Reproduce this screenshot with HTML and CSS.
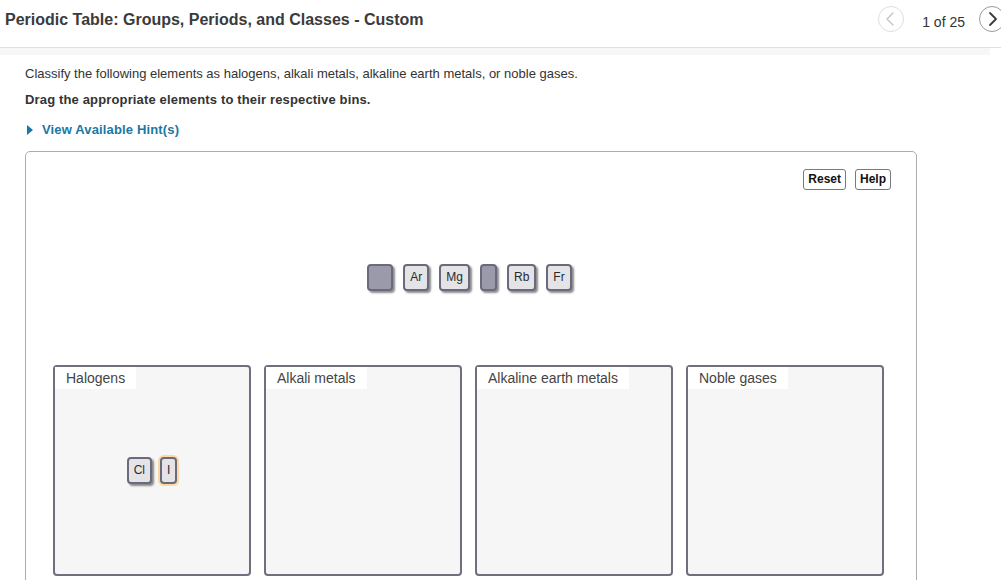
FILE: index.html
```html
<!DOCTYPE html>
<html lang="en">
<head>
<meta charset="utf-8">
<title>Periodic Table: Groups, Periods, and Classes - Custom</title>
<link rel="stylesheet" href="styles.css">
</head>
<body>
<header class="topbar">
  <h1 class="title">Periodic Table: Groups, Periods, and Classes - Custom</h1>
  <nav class="pager">
    <span class="circle circle-prev"><svg width="24" height="24" viewBox="0 0 24 24"><polyline points="14,6 8,12 14,18" fill="none" stroke="#c9c9c9" stroke-width="1.5" stroke-linecap="round" stroke-linejoin="round"/></svg></span>
    <span class="count">1 of 25</span>
    <span class="circle circle-next"><svg width="24" height="24" viewBox="0 0 24 24"><polyline points="10,6 16,12 10,18" fill="none" stroke="#3a3a3a" stroke-width="1.8" stroke-linecap="round" stroke-linejoin="round"/></svg></span>
  </nav>
</header>
<div class="strip"></div>
<main class="content">
  <p class="lead">Classify the following elements as halogens, alkali metals, alkaline earth metals, or noble gases.</p>
  <p class="task">Drag the appropriate elements to their respective bins.</p>
  <div class="hint"><span class="tri"></span><span class="hint-text">View Available Hint(s)</span></div>
  <section class="board">
    <div class="toolbar">
      <button class="btn">Reset</button>
      <button class="btn">Help</button>
    </div>
    <div class="pool">
      <span class="tile tile-blank tile-wide"></span>
      <span class="tile">Ar</span>
      <span class="tile">Mg</span>
      <span class="tile tile-blank tile-narrow"></span>
      <span class="tile">Rb</span>
      <span class="tile">Fr</span>
    </div>
    <div class="bins">
      <div class="bin">
        <span class="bin-label">Halogens</span>
        <div class="bin-tiles">
          <span class="tile">Cl</span>
          <span class="tile tile-active">I</span>
        </div>
      </div>
      <div class="bin">
        <span class="bin-label">Alkali metals</span>
      </div>
      <div class="bin">
        <span class="bin-label">Alkaline earth metals</span>
      </div>
      <div class="bin">
        <span class="bin-label">Noble gases</span>
      </div>
    </div>
  </section>
</main>
</body>
</html>
```
FILE: styles.css
```css
html, body {
  margin: 0;
  padding: 0;
  overflow: hidden;
  background: #fff;
}
body {
  font-family: "Liberation Sans", Arial, sans-serif;
  color: #333;
  width: 1001px;
}
.topbar {
  display: flex;
  align-items: flex-start;
  height: 48px;
  box-sizing: border-box;
  border-bottom: 1px solid #e0e0e0;
  width: 1005px;
}
.title {
  flex: 1;
  margin: 0;
  padding: 10px 0 0 5px;
  font-size: 16px;
  line-height: 20px;
  font-weight: bold;
  color: #3b3b3b;
}
.pager {
  display: flex;
  align-items: center;
  margin-top: 6px;
}
.circle {
  width: 26px;
  height: 26px;
  box-sizing: border-box;
  border-radius: 50%;
  display: flex;
  align-items: center;
  justify-content: center;
  background: #fff;
}
.circle-prev {
  border: 1px solid #dedede;
}
.circle-next {
  border: 1px solid #9a9a9a;
}
.count {
  font-size: 14px;
  line-height: 16px;
  padding-top: 6px;
  margin: 0 14px 0 18px;
  color: #333;
}
.strip {
  width: 990px;
  height: 7px;
  background: #f7f7f7;
}
.content {
  padding: 0 0 0 25px;
}
.lead {
  margin: 11px 0 0;
  font-size: 13px;
  line-height: 16px;
  color: #333;
}
.task {
  margin: 10px 0 0;
  font-size: 13px;
  line-height: 16px;
  font-weight: bold;
  letter-spacing: 0.15px;
  color: #333;
}
.hint {
  margin-top: 13px;
  display: flex;
  align-items: center;
  height: 18px;
}
.tri {
  width: 0;
  height: 0;
  border-top: 5px solid transparent;
  border-bottom: 5px solid transparent;
  border-left: 6px solid #1b77a3;
  margin: 0 9px 0 2px;
}
.hint-text {
  font-size: 13px;
  line-height: 18px;
  font-weight: bold;
  letter-spacing: 0.15px;
  color: #1b77a3;
}
.board {
  margin-top: 12px;
  width: 892px;
  box-sizing: border-box;
  border: 1px solid #acacac;
  border-radius: 5px;
  padding-bottom: 40px;
}
.toolbar {
  display: flex;
  justify-content: flex-end;
  gap: 9px;
  padding: 17px 25px 0 0;
}
.btn {
  height: 21px;
  box-sizing: border-box;
  padding: 0 4px;
  border: 1px solid #7a7a7a;
  border-radius: 3px;
  background: #fff;
  font-family: "Liberation Sans", Arial, sans-serif;
  font-size: 12px;
  font-weight: bold;
  color: #111;
  line-height: 19px;
}
.pool {
  display: flex;
  justify-content: center;
  gap: 10px;
  margin-top: 74px;
  padding-right: 3px;
}
.tile {
  display: inline-block;
  height: 27px;
  box-sizing: border-box;
  padding: 0 5px;
  border: 2px solid #6a6a7c;
  border-radius: 4px;
  background: #e4e4e7;
  font-size: 12px;
  line-height: 23px;
  color: #2a2a2a;
  box-shadow: 2px 2px 2px rgba(0, 0, 0, 0.45);
}
.tile-blank {
  background: #9a9aab;
  padding: 0;
}
.tile-wide {
  width: 26px;
}
.tile-narrow {
  width: 17px;
}
.tile-active {
  box-shadow: 0 0 0 2px #fcd9a2, 1px 1px 2px rgba(0, 0, 0, 0.2);
}
.bins {
  display: flex;
  gap: 13px;
  margin-top: 74px;
  padding-left: 27px;
}
.bin {
  width: 198px;
  height: 211px;
  box-sizing: border-box;
  border: 2px solid #6f6f80;
  border-radius: 4px;
  background: #f6f6f6;
  display: grid;
}
.bin-label {
  grid-area: 1 / 1;
  align-self: start;
  justify-self: start;
  background: #fff;
  padding: 1px 11px 0;
  font-size: 14px;
  line-height: 21px;
  color: #444;
}
.bin-tiles {
  grid-area: 1 / 1;
  align-self: center;
  justify-self: center;
  display: flex;
  gap: 8px;
}
```
